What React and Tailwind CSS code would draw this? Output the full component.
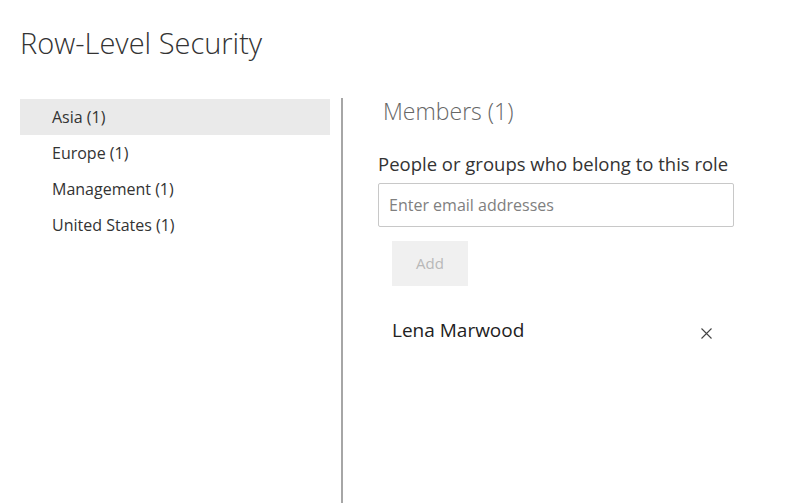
import React from 'react';

const roles = ['Asia (1)', 'Europe (1)', 'Management (1)', 'United States (1)'];

export default function App() {
  return (
    <div className="h-[503px] w-[787px] overflow-hidden bg-white text-[#333] font-['Open_Sans',sans-serif]">
      <h1 className="pl-5 pt-[23px] text-[29px] font-light leading-[40px] text-[#333]">Row-Level Security</h1>

      <div className="mt-[35px] flex h-[405px]">
        {/* role list */}
        <div className="w-[341px] shrink-0 pl-5 pt-px">
          {roles.map((r, i) => (
            <div
              key={r}
              className={`h-9 w-[310px] pl-8 text-[16px] leading-9 ${i === 0 ? 'bg-[#eaeaea]' : ''}`}
            >
              {r}
            </div>
          ))}
        </div>

        <div className="w-[2px] shrink-0 bg-[#a6a6a6]" />

        {/* members */}
        <div className="pl-[35px]">
          <div className="ml-[5px] text-[23px] font-light leading-[26px] text-[#666]">Members (1)</div>
          <div className="mt-[29px] text-[18.5px] leading-[22px] text-[#333]">People or groups who belong to this role</div>
          <input
            className="mt-[8px] h-[44px] w-[356px] rounded-[2px] border border-[#c8c8c8] px-[10px] text-[16px] outline-none placeholder:text-[#808080]"
            placeholder="Enter email addresses"
          />
          <button className="ml-[14px] mt-[14px] block h-[45px] w-[76px] bg-[#f0f0f0] text-[15px] text-[#b8b8b8]">Add</button>
          <div className="mt-[32px] ml-[14px] flex w-[320px] items-center justify-between">
            <span className="text-[19px] leading-[24px] text-[#222]">Lena Marwood</span>
            <svg width="11" height="11" viewBox="0 0 11 11" className="mt-[6px]">
              <path d="M0.5 0.5L10.5 10.5M10.5 0.5L0.5 10.5" stroke="#444" strokeWidth="1.1" />
            </svg>
          </div>
        </div>
      </div>
    </div>
  );
}
